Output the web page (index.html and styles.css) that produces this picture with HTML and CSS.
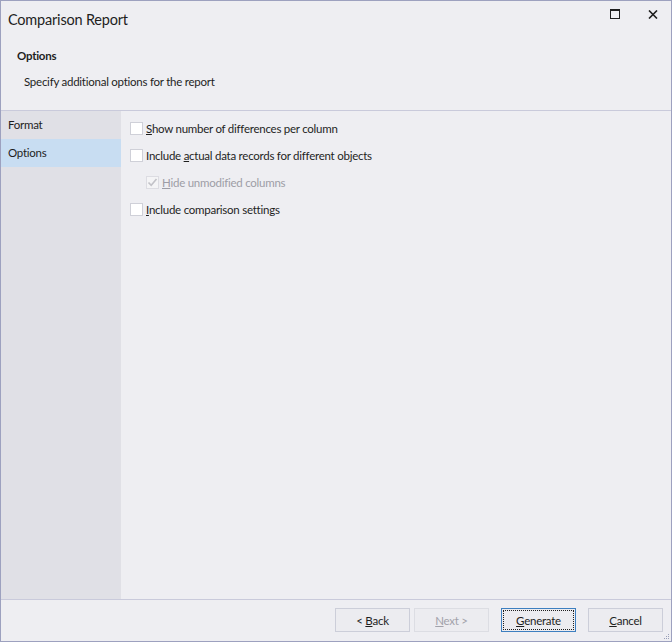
FILE: index.html
```html
<!DOCTYPE html>
<html>
<head>
<meta charset="utf-8">
<link rel="stylesheet" href="styles.css">
</head>
<body>
<div class="window">
  <div class="header">
    <div class="titlebar">
      <div class="title">Comparison Report</div>
      <div class="controls">
        <span class="max"></span>
        <svg class="close" width="10" height="9" viewBox="0 0 10 9"><path d="M1 0.5 L9 8.5 M9 0.5 L1 8.5" stroke="#1e1e1e" stroke-width="1.6"/></svg>
      </div>
    </div>
    <div class="page-title">Options</div>
    <div class="page-desc">Specify additional options for the report</div>
  </div>
  <div class="main">
    <div class="sidebar">
      <div class="nav-item">Format</div>
      <div class="nav-item selected">Options</div>
    </div>
    <div class="content">
      <div class="row"><span class="cb"></span><span class="label"><u>S</u>how number of differences per column</span></div>
      <div class="row"><span class="cb"></span><span class="label">Include <u>a</u>ctual data records for different objects</span></div>
      <div class="row sub disabled"><span class="cb checked"><svg width="11" height="11" viewBox="0 0 11 11"><path d="M1.5 5.5 L4.2 8.3 L9.5 2" fill="none" stroke="#c2c2c8" stroke-width="1.6"/></svg></span><span class="label"><u>H</u>ide unmodified columns</span></div>
      <div class="row"><span class="cb"></span><span class="label"><u>I</u>nclude comparison settings</span></div>
    </div>
  </div>
  <div class="footer">
    <button class="btn back">&lt; <u>B</u>ack</button>
    <button class="btn disabled"><u>N</u>ext &gt;</button>
    <button class="btn default"><span class="focus"><u>G</u>enerate</span></button>
    <button class="btn cancel"><u>C</u>ancel</button>
    <svg class="grip" width="6" height="6" viewBox="0 0 6 6">
      <rect x="4" y="0" width="1" height="1" fill="#9aa0b8"/>
      <rect x="2" y="2" width="1" height="1" fill="#9aa0b8"/>
      <rect x="4" y="2" width="1" height="1" fill="#9aa0b8"/>
      <rect x="0" y="4" width="1" height="1" fill="#9aa0b8"/>
      <rect x="2" y="4" width="1" height="1" fill="#9aa0b8"/>
      <rect x="4" y="4" width="1" height="1" fill="#9aa0b8"/>
    </svg>
  </div>
</div>
</body>
</html>
```
FILE: styles.css
```css
* { box-sizing: border-box; }
html, body { margin: 0; padding: 0; }
body {
  font-family: Lato, "Noto Sans", sans-serif;
  font-size: 11.5px;
  letter-spacing: -0.25px;
  color: #1e1e1e;
  background: #eeeef2;
}
.window {
  width: 672px;
  height: 642px;
  border: 1px solid #9da1bf;
  background: #eeeef2;
  display: flex;
  flex-direction: column;
  position: relative;
}
.header {
  height: 110px;
  border-bottom: 1px solid #c9cadb;
  flex: none;
}
.titlebar {
  display: flex;
  justify-content: space-between;
  align-items: flex-start;
  height: 36px;
}
.title {
  font-size: 14.5px;
  letter-spacing: -0.2px;
  padding: 9px 0 0 7px;
  line-height: 20px;
}
.controls {
  display: flex;
  align-items: center;
  padding-top: 8px;
  gap: 28px;
  padding-right: 13px;
}
.max {
  display: block;
  width: 10px;
  height: 10px;
  border: 1px solid #1e1e1e;
  border-top-width: 2px;
}
.close { display: block; }
.page-title {
  font-weight: bold;
  padding-left: 16px;
  line-height: 18px;
  margin-top: 10px;
}
.page-desc {
  padding-left: 23px;
  margin-top: 8px;
  line-height: 18px;
}
.main {
  flex: 1;
  display: flex;
  border-bottom: 1px solid #c9cadb;
}
.sidebar {
  width: 120px;
  background: #e0e0e6;
  flex: none;
}
.nav-item {
  height: 28px;
  line-height: 28px;
  padding-left: 7px;
}
.nav-item.selected { background: #c8ddf2; }
.content {
  padding: 11px 0 0 9px;
  display: flex;
  flex-direction: column;
  gap: 14px;
}
.row {
  display: flex;
  align-items: center;
  height: 13px;
}
.row.sub { padding-left: 16px; }
.cb {
  width: 13px;
  height: 13px;
  background: #ffffff;
  border: 1px solid #cfd0d8;
  margin-right: 3px;
  display: flex;
  align-items: center;
  justify-content: center;
  flex: none;
}
.cb.checked { background: #f4f4f6; border-color: #dcdce2; }
.cb svg { display: block; }
.label { line-height: 16px; }
.disabled .label { color: #9d9da6; }
.footer {
  height: 41px;
  display: flex;
  align-items: flex-start;
  justify-content: flex-end;
  padding: 8px 8px 0 0;
  position: relative;
}
.btn {
  font-family: inherit;
  font-size: 11.5px;
  letter-spacing: -0.25px;
  color: #1e1e1e;
  width: 75px;
  height: 24px;
  background: #ececf0;
  border: 1px solid #ccced9;
  padding: 0;
  margin-left: 4px;
}
.btn.back { margin-left: 0; }
.btn.disabled { color: #a2a2aa; border-color: #dcdde3; }
.btn.default {
  margin-left: 12px;
  border-color: #3d7fc0;
  padding: 1px;
}
.btn.cancel { margin-left: 12px; }
.btn.default .focus {
  display: flex;
  align-items: center;
  justify-content: center;
  width: 100%;
  height: 100%;
  border: 1px dotted #1e1e1e;
}
.grip {
  position: absolute;
  right: 1px;
  bottom: 1px;
}
```
